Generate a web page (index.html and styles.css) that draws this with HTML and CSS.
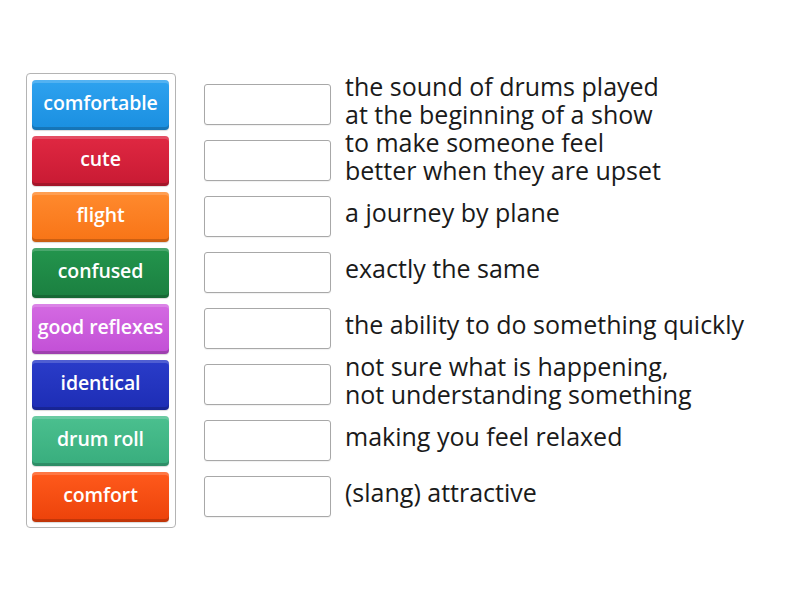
FILE: index.html
```html
<!DOCTYPE html>
<html lang="en">
<head>
<meta charset="utf-8">
<title>Match up</title>
<link rel="stylesheet" href="styles.css">
</head>
<body>
<main class="board">
  <section class="bank">
    <div class="tile t-blue">comfortable</div>
    <div class="tile t-red">cute</div>
    <div class="tile t-orange">flight</div>
    <div class="tile t-green">confused</div>
    <div class="tile t-pink">good reflexes</div>
    <div class="tile t-indigo">identical</div>
    <div class="tile t-sea">drum roll</div>
    <div class="tile t-flame">comfort</div>
  </section>
  <section class="targets">
    <div class="row"><div class="slot"></div><p class="def">the sound of drums played<br>at the beginning of a show</p></div>
    <div class="row"><div class="slot"></div><p class="def">to make someone feel<br>better when they are upset</p></div>
    <div class="row"><div class="slot"></div><p class="def">a journey by plane</p></div>
    <div class="row"><div class="slot"></div><p class="def">exactly the same</p></div>
    <div class="row"><div class="slot"></div><p class="def">the ability to do something quickly</p></div>
    <div class="row"><div class="slot"></div><p class="def">not sure what is happening,<br>not understanding something</p></div>
    <div class="row"><div class="slot"></div><p class="def">making you feel relaxed</p></div>
    <div class="row"><div class="slot"></div><p class="def">(slang) attractive</p></div>
  </section>
</main>
</body>
</html>
```

FILE: styles.css
```css
html, body {
  margin: 0;
  background: #fff;
}

body {
  font-family: "Open Sans", "Liberation Sans", sans-serif;
  color: #1a1a1a;
}

.board {
  display: flex;
  align-items: flex-start;
  padding: 73px 0 0 26px;
}

.bank {
  display: flex;
  flex-direction: column;
  gap: 6px;
  width: 143px;
  padding: 6px 0 5px 5px;
  border: 1px solid #b4b4b4;
  border-radius: 4px;
  box-sizing: content-box;
}

.tile {
  width: 137px;
  height: 50px;
  box-sizing: border-box;
  display: flex;
  align-items: center;
  justify-content: center;
  padding-bottom: 5px;
  border-radius: 4px;
  color: #fff;
  font-weight: 600;
  font-size: 19.5px;
  letter-spacing: -0.1px;
  white-space: nowrap;
  box-shadow: inset 0 3px 0 rgba(255, 255, 255, 0.18), inset 0 -3px 0 rgba(0, 0, 0, 0.18), 0 1px 1px rgba(0, 0, 0, 0.15);
}

.t-blue   { background: linear-gradient(#2ea2ef, #1a8fe0); }
.t-red    { background: linear-gradient(#e02842, #c81a33); }
.t-orange { background: linear-gradient(#ff8a2e, #f87416); }
.t-green  { background: linear-gradient(#23954d, #1b7f40); }
.t-pink   { background: linear-gradient(#d46ae2, #c24fd6); }
.t-indigo { background: linear-gradient(#2a3cc9, #1d2db5); }
.t-sea    { background: linear-gradient(#4bc08f, #38ad7d); }
.t-flame  { background: linear-gradient(#ff5a1c, #ec420a); }

.targets {
  display: flex;
  flex-direction: column;
  gap: 6px;
  margin: 6px 0 0 28px;
}

.row {
  height: 50px;
  display: flex;
  align-items: center;
}

.slot {
  width: 127px;
  height: 41px;
  box-sizing: border-box;
  border: 1px solid #a8a8a8;
  border-radius: 3px;
  background: #fff;
  flex: none;
  margin-right: 14px;
  box-shadow: 0 1px 1px rgba(0, 0, 0, 0.06);
}

.def {
  margin: 0;
  padding-bottom: 8px;
  font-size: 25px;
  line-height: 28px;
  color: #1a1a1a;
  white-space: nowrap;
}
```
